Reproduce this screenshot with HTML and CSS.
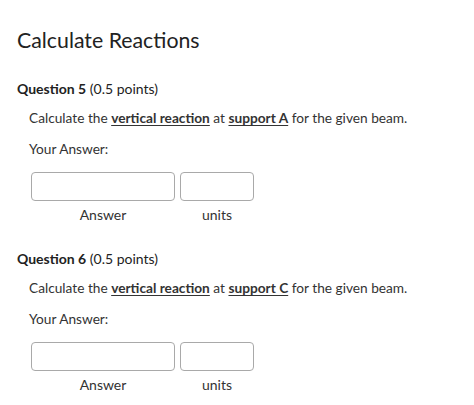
FILE: index.html
```html
<!DOCTYPE html>
<html>
  <head>
    <title>Calculate Reactions</title>
    <link rel="stylesheet" href="styles.css">
  </head>
  <body>
    <h1 class="title">Calculate Reactions</h1>

    <div class="question">
      <h3 class="qhead"><b>Question 5</b> (0.5 points)</h3>
      <div class="qbody">
        <p class="prompt">Calculate the <u><b>vertical reaction</b></u> at <u><b>support A</b></u> for the given beam.</p>
        <p class="yours">Your Answer:</p>
        <div class="answerRow">
          <div class="field">
            <input type="text" class="answer"/>
            <label>Answer</label>
          </div>
          <div class="field">
            <input type="text" class="units"/>
            <label>units</label>
          </div>
        </div>
      </div>
    </div>

    <div class="question">
      <h3 class="qhead"><b>Question 6</b> (0.5 points)</h3>
      <div class="qbody">
        <p class="prompt">Calculate the <u><b>vertical reaction</b></u> at <u><b>support C</b></u> for the given beam.</p>
        <p class="yours">Your Answer:</p>
        <div class="answerRow">
          <div class="field">
            <input type="text" class="answer"/>
            <label>Answer</label>
          </div>
          <div class="field">
            <input type="text" class="units"/>
            <label>units</label>
          </div>
        </div>
      </div>
    </div>
  </body>
</html>
```
FILE: styles.css
```css
body{
    margin:0;
    padding:0 17px;
    font-family: Lato, "Open Sans", sans-serif;
    color:#2d3b45;
    background:#ffffff;
}

.title{
    margin:27px 0 0 0;
    font-size:21.3px;
    line-height:26px;
    font-weight:normal;
    color:#222222;
}

.question{
    margin-top:27px;
}
.question + .question{
    margin-top:26px;
}

.qhead{
    margin:0;
    font-size:14px;
    line-height:18px;
    font-weight:normal;
    color:#222222;
}

.qbody{
    padding-left:12px;
}

.prompt{
    margin:11px 0 0 0;
    font-size:13.7px;
    line-height:18px;
    color:#333333;
}
.prompt u{
    text-decoration-thickness:1px;
    text-underline-offset:2px;
}

.yours{
    margin:13px 0 0 0;
    font-size:13.7px;
    line-height:18px;
    color:#333333;
}

.answerRow{
    display:flex;
    gap:5px;
    margin:14px 0 0 2px;
}

.field{
    display:flex;
    flex-direction:column;
    align-items:center;
}

.field input{
    box-sizing:border-box;
    height:29px;
    border:1px solid #a9a9a9;
    border-radius:4px;
    background:#fff;
    margin:0;
}
.answer{
    width:144px;
}
.units{
    width:74px;
}

.field label{
    margin-top:5px;
    font-size:14px;
    line-height:18px;
    color:#333333;
}
```
